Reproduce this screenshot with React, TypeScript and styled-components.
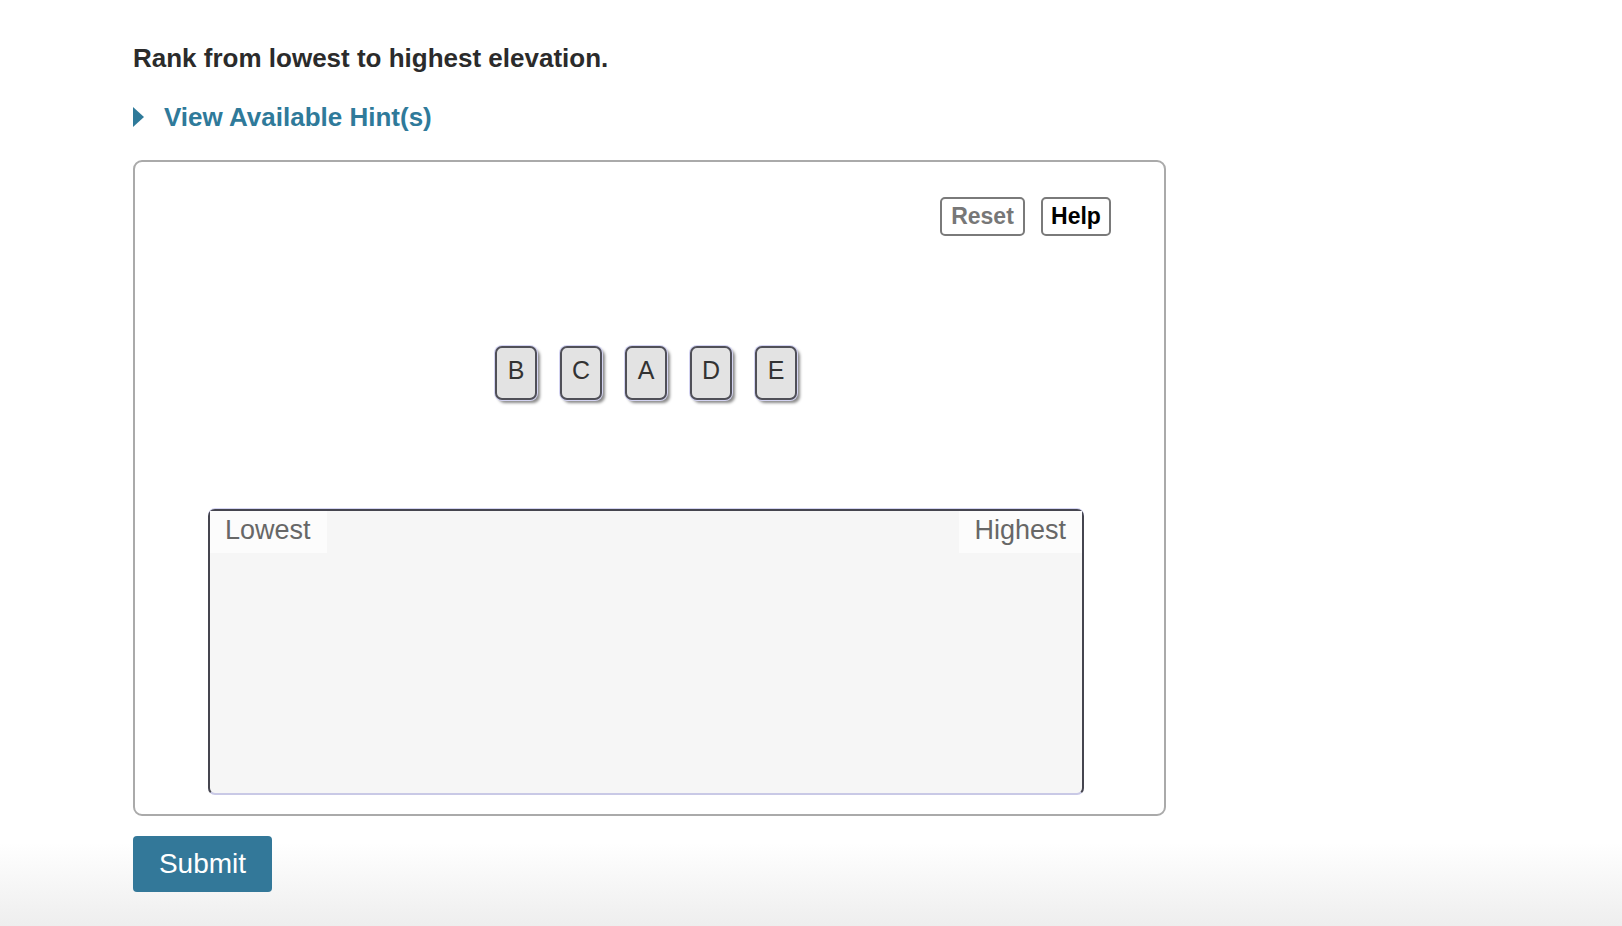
import * as React from "react"
import styled, { createGlobalStyle } from "styled-components"

const GlobalStyle = createGlobalStyle`
  html, body {
    margin: 0;
    padding: 0;
    height: 100%;
  }
  body {
    font-family: "Liberation Sans", Arial, sans-serif;
    background: linear-gradient(to bottom, #ffffff 0, #ffffff 91%, #eeeeee 100%);
  }
  #root {
    min-height: 100%;
  }
`

const Page = styled.main`
  box-sizing: border-box;
  padding: 43px 0 0 133px;
  width: 1166px;
`

const Prompt = styled.h1`
  margin: 0;
  font-size: 26px;
  line-height: 30px;
  font-weight: bold;
  color: #2b2b2b;
`

const HintToggle = styled.div`
  display: flex;
  align-items: center;
  gap: 20px;
  margin-top: 29px;
  height: 30px;
  color: #2f7a9a;
  font-size: 26px;
  font-weight: bold;
  cursor: pointer;
`

const Caret = styled.span`
  width: 0;
  height: 0;
  border-top: 10px solid transparent;
  border-bottom: 10px solid transparent;
  border-left: 11px solid #2f7a9a;
`

const Card = styled.section`
  box-sizing: border-box;
  margin-top: 28px;
  width: 1033px;
  height: 656px;
  border: 2px solid #aaaaaa;
  border-radius: 9px;
  padding: 35px 53px 0 73px;
  display: flex;
  flex-direction: column;
`

const Toolbar = styled.div`
  display: flex;
  justify-content: flex-end;
  gap: 16px;
`

const ToolButton = styled.button<{ $primary?: boolean }>`
  box-sizing: border-box;
  height: 39px;
  padding: 0 8px;
  min-width: ${(p) => (p.$primary ? "70px" : "85px")};
  border: 2px solid #7a7a7a;
  border-radius: 5px;
  background: #ffffff;
  font-family: "Liberation Sans", Arial, sans-serif;
  font-size: 23px;
  font-weight: bold;
  color: ${(p) => (p.$primary ? "#000000" : "#777777")};
  cursor: pointer;
`

const TileRow = styled.div`
  display: flex;
  justify-content: center;
  gap: 23px;
  margin-top: 110px;
  margin-right: 27px;
`

const Tile = styled.div`
  box-sizing: border-box;
  width: 42px;
  height: 54px;
  border: 2px solid #505058;
  border-radius: 7px;
  background: #e3e3e3;
  box-shadow: 0 0 0 1px #d4d4f2, 3px 3px 3px #8a8a8a;
  display: flex;
  align-items: center;
  justify-content: center;
  padding-bottom: 6px;
  font-size: 25px;
  color: #333333;
  cursor: grab;
`

const DropZone = styled.div`
  box-sizing: border-box;
  margin-top: 109px;
  width: 876px;
  height: 286px;
  background: #f6f6f6;
  border: 2px solid #45454f;
  border-bottom-color: #c9c9e6;
  border-radius: 7px;
  box-shadow: 0 -1px 0 0 #d4d4f2;
  display: flex;
  justify-content: space-between;
  align-items: flex-start;
`

const ZoneLabel = styled.span`
  box-sizing: border-box;
  height: 42px;
  padding: 0 16px 0 15px;
  background: #fcfcfc;
  font-size: 27px;
  line-height: 38px;
  color: #676767;
`

const SubmitButton = styled.button`
  margin-top: 20px;
  width: 139px;
  height: 56px;
  border: none;
  border-radius: 4px;
  background: #337899;
  color: #ffffff;
  font-family: "Liberation Sans", Arial, sans-serif;
  font-size: 28px;
  cursor: pointer;
`

const tiles = ["B", "C", "A", "D", "E"]

const App: React.FC = () => {
  return (
    <>
      <GlobalStyle />
      <Page>
        <Prompt>Rank from lowest to highest elevation.</Prompt>
        <HintToggle>
          <Caret />
          View Available Hint(s)
        </HintToggle>
        <Card>
          <Toolbar>
            <ToolButton>Reset</ToolButton>
            <ToolButton $primary>Help</ToolButton>
          </Toolbar>
          <TileRow>
            {tiles.map((t) => (
              <Tile key={t}>{t}</Tile>
            ))}
          </TileRow>
          <DropZone>
            <ZoneLabel>Lowest</ZoneLabel>
            <ZoneLabel>Highest</ZoneLabel>
          </DropZone>
        </Card>
        <SubmitButton>Submit</SubmitButton>
      </Page>
    </>
  )
}

export default App
